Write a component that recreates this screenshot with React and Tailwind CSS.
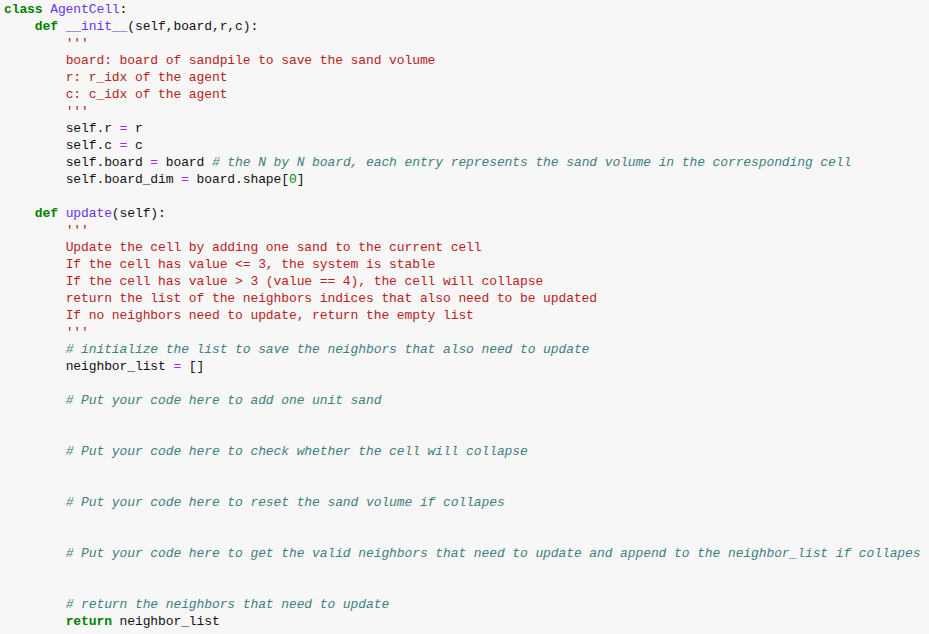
import React from 'react';

const K = ({ children }) => <span className="font-bold text-[#008000]">{children}</span>;
const D = ({ children }) => <span className="text-[#6a35e8]">{children}</span>;
const O = ({ children }) => <span className="text-[#aa22ff]">{children}</span>;
const S = ({ children }) => <span className="text-[#ba2121]">{children}</span>;
const C = ({ children }) => <span className="italic text-[#408080]">{children}</span>;
const N = ({ children }) => <span className="text-[#008800]">{children}</span>;

const i1 = '    ';
const i2 = '        ';

const lines = [
  <><K>class</K> <D>AgentCell</D>:</>,
  <>{i1}<K>def</K> <D>__init__</D>(self,board,r,c):</>,
  <>{i2}<S>'''</S></>,
  <>{i2}<S>board: board of sandpile to save the sand volume</S></>,
  <>{i2}<S>r: r_idx of the agent</S></>,
  <>{i2}<S>c: c_idx of the agent</S></>,
  <>{i2}<S>'''</S></>,
  <>{i2}self.r <O>=</O> r</>,
  <>{i2}self.c <O>=</O> c</>,
  <>{i2}self.board <O>=</O> board <C># the N by N board, each entry represents the sand volume in the corresponding cell</C></>,
  <>{i2}self.board_dim <O>=</O> board.shape[<N>0</N>]</>,
  null,
  <>{i1}<K>def</K> <D>update</D>(self):</>,
  <>{i2}<S>'''</S></>,
  <>{i2}<S>Update the cell by adding one sand to the current cell</S></>,
  <>{i2}<S>If the cell has value &lt;= 3, the system is stable</S></>,
  <>{i2}<S>If the cell has value &gt; 3 (value == 4), the cell will collapse</S></>,
  <>{i2}<S>return the list of the neighbors indices that also need to be updated</S></>,
  <>{i2}<S>If no neighbors need to update, return the empty list</S></>,
  <>{i2}<S>'''</S></>,
  <>{i2}<C># initialize the list to save the neighbors that also need to update</C></>,
  <>{i2}neighbor_list <O>=</O> []</>,
  null,
  <>{i2}<C># Put your code here to add one unit sand</C></>,
  null,
  null,
  <>{i2}<C># Put your code here to check whether the cell will collapse</C></>,
  null,
  null,
  <>{i2}<C># Put your code here to reset the sand volume if collapes</C></>,
  null,
  null,
  <>{i2}<C># Put your code here to get the valid neighbors that need to update and append to the neighbor_list if collapes</C></>,
  null,
  null,
  <>{i2}<C># return the neighbors that need to update</C></>,
  <>{i2}<K>return</K> neighbor_list</>,
];

export default function App() {
  return (
    <div className="min-h-[634px] w-full overflow-hidden bg-[#f7f7f7]">
      <pre className="pl-1 pt-px m-0 font-['Liberation_Mono',monospace] text-[13px] leading-[17px] tracking-[-0.1px] text-[#111] whitespace-pre">
        {lines.map((l, i) => (
          <div key={i} className="h-[17px]">{l ?? ' '}</div>
        ))}
      </pre>
    </div>
  );
}
